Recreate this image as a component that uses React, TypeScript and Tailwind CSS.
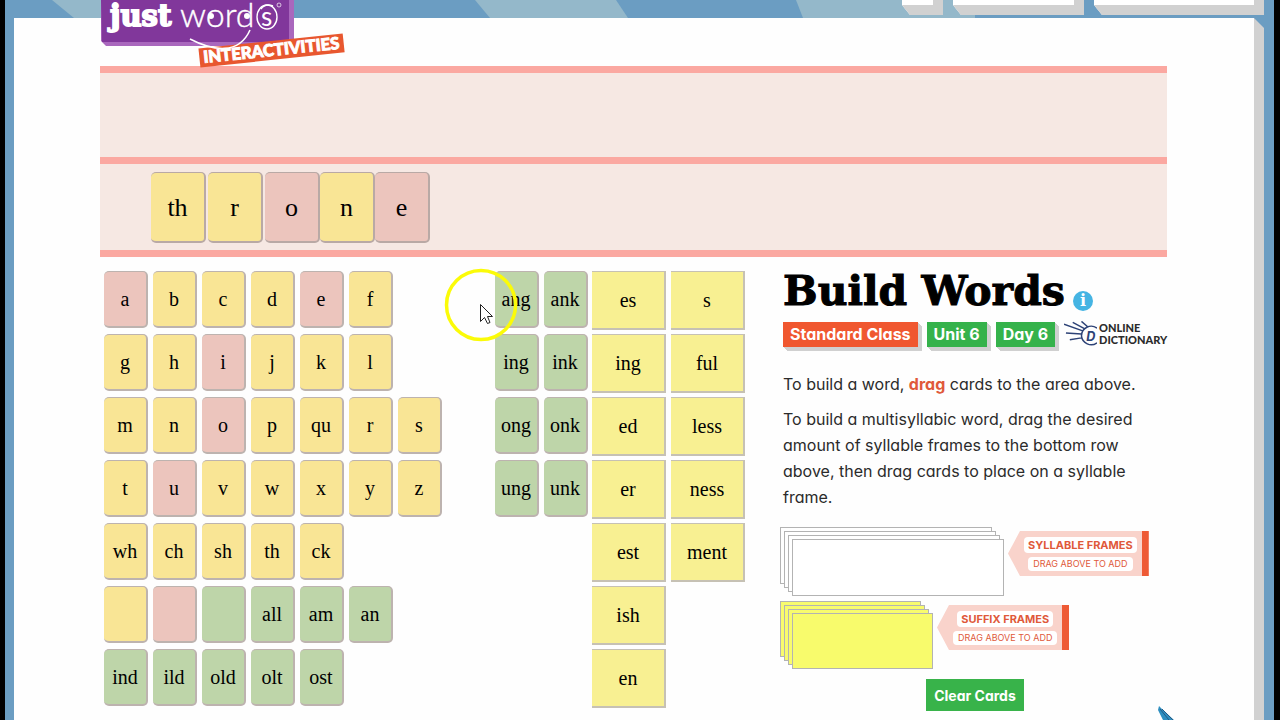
import React from "react";

type Tone = "yellow" | "pink" | "green";

interface CardData {
  label: string;
  tone: Tone;
}

const tones: Record<Tone, string> = {
  yellow: "bg-[#f9e595]",
  pink: "bg-[#ecc5bd]",
  green: "bg-[#bed5a9]",
};

const y = (label: string): CardData => ({ label, tone: "yellow" });
const p = (label: string): CardData => ({ label, tone: "pink" });
const g = (label: string): CardData => ({ label, tone: "green" });

const letterRows: CardData[][] = [
  [p("a"), y("b"), y("c"), y("d"), p("e"), y("f")],
  [y("g"), y("h"), p("i"), y("j"), y("k"), y("l")],
  [y("m"), y("n"), p("o"), y("p"), y("qu"), y("r"), y("s")],
  [y("t"), p("u"), y("v"), y("w"), y("x"), y("y"), y("z")],
  [y("wh"), y("ch"), y("sh"), y("th"), y("ck")],
  [y(""), p(""), g(""), g("all"), g("am"), g("an")],
  [g("ind"), g("ild"), g("old"), g("olt"), g("ost")],
];

const weldedRows: CardData[][] = [
  [g("ang"), g("ank")],
  [g("ing"), g("ink")],
  [g("ong"), g("onk")],
  [g("ung"), g("unk")],
];

const suffixColumns = [
  ["es", "ing", "ed", "er", "est", "ish", "en"],
  ["s", "ful", "less", "ness", "ment"],
];

// Cards that touch belong to the same group
const trayGroups: CardData[][] = [[y("th")], [y("r")], [p("o"), y("n"), p("e")]];

const LetterCard: React.FC<{ card: CardData }> = ({ card }) => (
  <button
    aria-label={card.label || "blank card"}
    className={`h-[57px] w-11 rounded-[5px] border-t border-r-2 border-b-2 border-[#bdb3af] text-[20px] leading-6 ${tones[card.tone]}`}
  >
    {card.label}
  </button>
);

const CardRows: React.FC<{ rows: CardData[][] }> = ({ rows }) => (
  <div className="flex flex-col gap-[6px]">
    {rows.map((row, i) => (
      <div key={i} className="flex gap-[5px]">
        {row.map((card, j) => (
          <LetterCard key={j} card={card} />
        ))}
      </div>
    ))}
  </div>
);

const Logo = () => (
  <svg className="h-[70px] w-[250px]" viewBox="0 0 250 70">
    <path d="M0 0H193V46H5L0 41Z" fill="#a967bd" />
    <path d="M0 0H188V42H1Z" fill="#81379b" />
    <text x="9" y="26" fontFamily="DejaVu Serif" fontWeight="bold" fontSize="29" fill="#fff" stroke="#fff" strokeWidth="1.8">just</text>
    <text x="79" y="27" fontFamily="Lato" fontWeight="300" fontSize="34" fill="#fff" stroke="#fff" strokeWidth="0.4">word</text>
    <text x="160" y="26" fontFamily="Lato" fontWeight="400" fontSize="26" fill="#fff">s</text>
    <g fill="none" stroke="#fff" strokeWidth="1.4">
      <ellipse cx="166" cy="17" rx="10" ry="12" />
      <path d="M160 9Q164 3 172 6" />
      <circle cx="178" cy="5" r="2" strokeWidth="0.7" />
    </g>
    <circle cx="110" cy="16" r="3" fill="#fff" />
    <circle cx="146" cy="16" r="3" fill="#fff" />
    <g transform="rotate(-6 170 50)">
      <rect x="98" y="41" width="145" height="19" fill="#e8572f" />
      <text x="102" y="56" fontFamily="Lato" fontWeight="900" fontSize="16.700" fill="#fff" stroke="#fff" strokeWidth="0.9">INTERACTIVITIES</text>
    </g>
    <path d="M89 39C112 51 138 55 149 30" fill="none" stroke="#fff" strokeWidth="1.6" />
  </svg>
);

const NavBox: React.FC<{ width: string }> = ({ width }) => (
  <div className={`relative h-[15px] border-r-10 border-b-10 border-[#d1d1d1] bg-white [clip-path:polygon(0_0,100%_0,100%_100%,8px_100%,0_5px)] ${width}`} />
);

const Tag: React.FC<{ color: string; children: React.ReactNode }> = ({ color, children }) => (
  <span className={`flex h-[25px] items-center px-[7px] text-[16px] font-bold whitespace-nowrap text-white shadow-[1px_1px_#d0d0d0,2px_2px_#d0d0d0,3px_3px_#d0d0d0,4px_4px_#d0d0d0] ${color}`}>
    {children}
  </span>
);

const FrameStack: React.FC<{ size: string; color: string; label: string }> = ({ size, color, label }) => (
  <div className="grid" role="img" aria-label={label}>
    <div className={`col-start-1 row-start-1 border border-[#b3b3b3] ${size} ${color}`} />
    <div className={`col-start-1 row-start-1 mt-1 ml-1 border border-[#b3b3b3] ${size} ${color}`} />
    <div className={`col-start-1 row-start-1 mt-2 ml-2 border border-[#b3b3b3] ${size} ${color}`} />
    <div className={`col-start-1 row-start-1 mt-3 ml-3 border border-[#b3b3b3] ${size} ${color}`} />
  </div>
);

const FrameLabel: React.FC<{ title: string }> = ({ title }) => (
  <div className="mt-1 flex h-[45px] flex-col items-center justify-center gap-1 border-r-7 border-[#ee5a35] bg-[#f9d3cb] pr-[5px] pl-4 whitespace-nowrap text-[#e0593a] [clip-path:polygon(12px_0,100%_0,100%_100%,12px_100%,0_50%)]">
    <span className="rounded bg-white px-1 text-[11px] leading-4 font-bold">{title}</span>
    <span className="rounded bg-white px-[5px] text-[9px] leading-[14px]">DRAG ABOVE TO ADD</span>
  </div>
);

export default function App() {
  return (
    <div className="h-screen overflow-hidden bg-black pr-[6px] pl-[5px]">
      <div className="flex h-full flex-col bg-[#6b9dc2] pr-[10px] pl-[9px]">
        {/* Bottom edge of the site navigation */}
        <header className="relative flex h-[18px] shrink-0 items-start justify-end gap-[10px]">
          <svg className="absolute top-0 left-0 h-[18px] w-[1250px]" viewBox="0 0 1250 18" fill="#94b8ca">
            <path d="M38 0H100V18H60Z" />
            <path d="M461 0H602L614 18H476Z" />
            <path d="M782 0H961V18H789Z" />
          </svg>
          <NavBox width="w-[41px]" />
          <NavBox width="w-[131px]" />
          <NavBox width="w-[170px]" />
        </header>

        <div className="flex min-h-0 flex-1 bg-[#d1d1d1] pr-[10px] [clip-path:polygon(0_0,calc(100%-10px)_0,100%_10px,100%_100%,0_100%)]">
          <main className="flex-1 bg-[#fefefe] pt-12 pr-[87px] pl-[86px]">
            {/* Word building area */}
            <section className="border-y-7 border-[#fba8a1] bg-[#f6e8e3]">
              <div className="h-[84px]" />
              <div className="flex h-[93px] items-start gap-[2px] border-t-7 border-[#fba8a1] pt-2 pl-[51px] font-['Liberation_Serif',serif]">
                {trayGroups.map((group, i) => (
                  <div key={i} className="flex">
                    {group.map((card) => (
                      <button
                        key={card.label}
                        className={`h-[71px] w-[55px] rounded-[5px] border-t border-r-2 border-b-2 border-[#b9a9a5] text-[26px] ${tones[card.tone]}`}
                      >
                        {card.label}
                      </button>
                    ))}
                  </div>
                ))}
              </div>
            </section>

            <div className="flex justify-between pt-[14px]">
              <section className="flex pl-1 font-['Liberation_Serif',serif] text-black">
                <CardRows rows={letterRows} />
                <div className="ml-[53px]">
                  <CardRows rows={weldedRows} />
                </div>
                <div className="ml-1 flex gap-[5px]">
                  {suffixColumns.map((column, i) => (
                    <div key={i} className="flex flex-col gap-1">
                      {column.map((label) => (
                        <button key={label} className="h-[59px] w-[74px] border-t border-r-2 border-b-2 border-[#c6c1b4] bg-[#f8f092] text-[20px] leading-6">
                          {label}
                        </button>
                      ))}
                    </div>
                  ))}
                </div>
              </section>

              <section className="w-[384px] font-['Inter',sans-serif] text-[#2b2b2b] [font-feature-settings:'cv11']">
                <div className="flex items-end gap-2">
                  <h1 className="font-['DejaVu_Serif',serif] text-[41px] leading-10 font-bold whitespace-nowrap text-black [-webkit-text-stroke:1px_black]">Build Words</h1>
                  <button aria-label="Information" className="size-5 rounded-full bg-[#45b4e3] font-['DejaVu_Serif',serif] text-[16px] leading-5 font-bold text-white">i</button>
                </div>
                <div className="mt-[10px] flex items-center gap-[9px]">
                  <Tag color="bg-[#f0572f]">Standard Class</Tag>
                  <Tag color="bg-[#35b24b]">Unit 6</Tag>
                  <Tag color="bg-[#35b24b]">Day 6</Tag>
                  <a href="#dictionary" className="flex items-center gap-[2px] font-['Lato',sans-serif] text-[11px] leading-3 font-black">
                    <svg className="h-[26px] w-[33px] shrink-0" viewBox="0 0 34 26" fill="none" stroke="#2e4377" strokeWidth="1.5">
                      <path d="M34 7A10 10 0 0 0 18 15A10 10 0 0 0 34 22M0 3L20 10M9 1L22 8M18 0L25 6M2 12L18 13M6 19L18 17" />
                      <text x="23" y="20" fontFamily="Inter" fontSize="13" fontWeight="bold" fontStyle="italic" fill="#2e4377" stroke="none">D</text>
                    </svg>
                    <span>ONLINE<br />DICTIONARY</span>
                  </a>
                </div>
                <p className="mt-6 text-[16px] leading-[26px]">
                  To build a word, <strong className="text-[#e0593a]">drag</strong> cards to the area above.
                </p>
                <p className="mt-[9px] pr-4 text-[16px] leading-[26px]">
                  To build a multisyllabic word, drag the desired amount of syllable frames to the bottom row above, then drag cards to place on a syllable frame.
                </p>
                <div className="mt-[17px] -ml-[3px] flex flex-col gap-[5px]">
                  <div className="flex gap-1">
                    <FrameStack size="h-[57px] w-[212px]" color="bg-white" label="Syllable frames" />
                    <FrameLabel title="SYLLABLE FRAMES" />
                  </div>
                  <div className="flex gap-1">
                    <FrameStack size="h-[56px] w-[141px]" color="bg-[#f8fb6c]" label="Suffix frames" />
                    <FrameLabel title="SUFFIX FRAMES" />
                  </div>
                </div>
                <button className="mx-auto mt-[10px] block h-8 bg-[#38b34a] px-2 text-[14px] font-bold text-white">Clear Cards</button>
              </section>
            </div>
          </main>
        </div>
      </div>

      <div className="absolute top-0 left-[101px]"><Logo /></div>

      {/* Highlighted pointer */}
      <svg className="pointer-events-none absolute top-[268px] left-[444px] size-[74px]" viewBox="0 0 74 74">
        <circle cx="37" cy="37" r="34.5" fill="none" stroke="#fbfb08" strokeWidth="3.5" />
        <path d="M36.5 36.5V53.5L40.5 49.5L43.5 55.5L46 54.5L43.5 48.5H48.5Z" fill="#fff" stroke="#222" />
      </svg>
      <svg className="pointer-events-none absolute right-[105px] bottom-0 h-[14px] w-[18px]" viewBox="0 0 18 14">
        <path d="M2 0L5 3L17 14H6L1 4Z" fill="#2f8fc0" />
        <path d="M3 3L12 14M5 3L16 14" stroke="#265a84" fill="none" />
      </svg>
    </div>
  );
}
